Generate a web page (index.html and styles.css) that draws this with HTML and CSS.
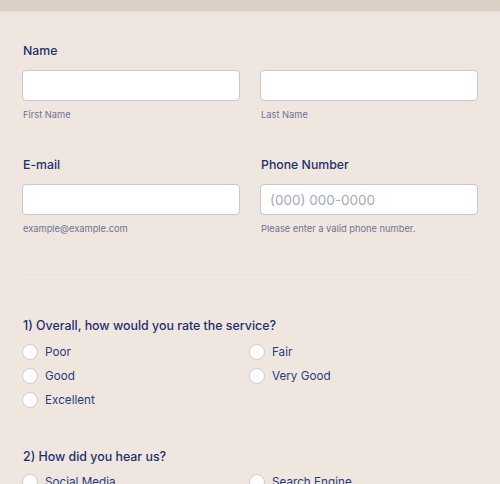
FILE: index.html
```html
<!DOCTYPE html>
<html lang="en">
<head>
<meta charset="utf-8">
<title>Form</title>
<link rel="stylesheet" href="styles.css">
</head>
<body>
<div class="topbar"></div>
<form class="form">
  <section class="field-group name-group">
    <div class="field">
      <label class="label">Name</label>
      <input class="input" type="text">
      <span class="sublabel">First Name</span>
    </div>
    <div class="field">
      <label class="label label-empty">&nbsp;</label>
      <input class="input" type="text">
      <span class="sublabel">Last Name</span>
    </div>
  </section>
  <section class="field-group contact-group">
    <div class="field">
      <label class="label">E-mail</label>
      <input class="input" type="email">
      <span class="sublabel">example@example.com</span>
    </div>
    <div class="field">
      <label class="label">Phone Number</label>
      <input class="input" type="tel" placeholder="(000) 000-0000">
      <span class="sublabel">Please enter a valid phone number.</span>
    </div>
  </section>
  <hr class="divider">
  <section class="question q1">
    <h3 class="question-title">1) Overall, how would you rate the service?</h3>
    <div class="options">
      <label class="option"><span class="radio"></span>Poor</label>
      <label class="option"><span class="radio"></span>Fair</label>
      <label class="option"><span class="radio"></span>Good</label>
      <label class="option"><span class="radio"></span>Very Good</label>
      <label class="option"><span class="radio"></span>Excellent</label>
    </div>
  </section>
  <section class="question q2">
    <h3 class="question-title">2) How did you hear us?</h3>
    <div class="options">
      <label class="option"><span class="radio"></span>Social Media</label>
      <label class="option"><span class="radio"></span>Search Engine</label>
    </div>
  </section>
</form>
</body>
</html>
```
FILE: styles.css
```css
* { box-sizing: border-box; }
html, body { margin: 0; padding: 0; }
body {
  background: #efe6e0;
  font-family: Inter, "Noto Sans", sans-serif;
  color: #1f2f6e;
  width: 500px;
  height: 484px;
  overflow: hidden;
}
.topbar {
  height: 12px;
  background: #dbd0c4;
  border-bottom: 1px solid #e4dcd6;
}
.form {
  padding: 0 22px;
}
.field-group {
  display: grid;
  grid-template-columns: minmax(0, 1fr) minmax(0, 1fr);
  column-gap: 20px;
}
.name-group { padding-top: 31px; }
.contact-group { padding-top: 35px; }
.field {
  display: flex;
  flex-direction: column;
  min-width: 0;
}
.label {
  font-size: 12.3px;
  font-weight: 500;
  line-height: 16px;
  height: 16px;
  margin-left: 1px;
  margin-bottom: 11px;
}
.input {
  width: 100%;
  min-width: 0;
  height: 31px;
  border: 1px solid #c5c7d2;
  border-radius: 4px;
  background: #fff;
  font-family: inherit;
  font-size: 13.5px;
  padding: 0 9px;
  color: #1f2f6e;
  outline: none;
}
.input::placeholder { color: #a6a9b9; }
.sublabel {
  margin-top: 7px;
  margin-left: 1px;
  font-size: 9.3px;
  line-height: 14px;
  color: #6c7493;
}
.divider {
  margin: 41px 0 0;
  border: 0;
  border-top: 1px dotted #f6f1ed;
  height: 0;
}
.question-title {
  margin: 0 0 0 1px;
  font-size: 12.4px;
  font-weight: 500;
  line-height: 16px;
}
.q1 { padding-top: 40px; }
.q2 { padding-top: 41px; }
.options {
  display: grid;
  grid-template-columns: 227px 1fr;
  row-gap: 8px;
  margin-top: 10px;
}
.q2 .options { margin-top: 9px; }
.option {
  display: flex;
  align-items: center;
  height: 16px;
  font-size: 11.7px;
  color: #2a3c7c;
}
.radio {
  width: 16px;
  height: 16px;
  border-radius: 50%;
  border: 1px solid #cbcbd3;
  background: #fff;
  margin-right: 7px;
  flex: none;
}
```
